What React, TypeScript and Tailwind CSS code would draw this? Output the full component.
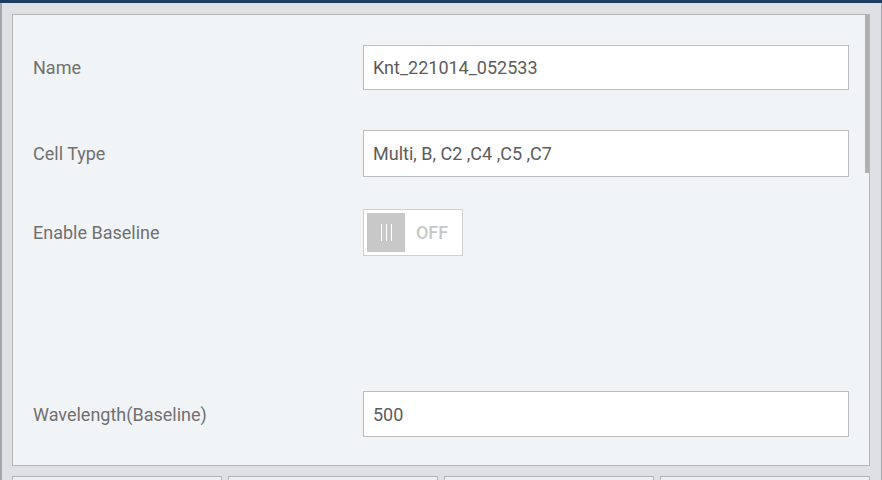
import React from 'react';

const Field: React.FC<{ label: string; value: string; className?: string; h?: string }> = ({ label, value, className, h }) => (
  <div className={`flex items-center ${className ?? ''}`}>
    <div className="w-[330px] text-[18px] text-[#707070]">{label}</div>
    <input
      readOnly
      value={value}
      className={`w-[486px] ${h ?? 'h-[46px]'} border border-[#bdbdbd] bg-white px-[9px] text-[18px] text-[#5c5c5c] outline-none`}
    />
  </div>
);

const Toggle: React.FC = () => (
  <div className="flex w-[100px] h-[47px] items-center border border-[#d0d0d0] bg-white p-[3px]">
    <div className="flex w-[38px] h-[39px] items-center justify-center gap-[4px] bg-[#c8c8c8]">
      <span className="w-px h-[17px] bg-white" />
      <span className="w-px h-[17px] bg-white" />
      <span className="w-px h-[17px] bg-white" />
    </div>
    <div className="flex-1 text-center text-[18px] font-medium text-[#c8c8c8]">OFF</div>
  </div>
);

export default function App() {
  return (
    <div className="w-[882px] h-[480px] overflow-hidden bg-[#1d3b5e] font-['Roboto',sans-serif]">
      <div className="h-[3px]" />
      <div className="flex h-[477px]">
        <div className="w-[2px] bg-[#a3a6ab]" />
        <div className="flex-1 bg-[#dfe0e4] pl-[10px] pr-[11px] pt-[11px]">
          <div className="relative h-[452px] border border-[#b5b5b5] bg-[#f0f4f7] pl-[20px] pt-[30px]">
            <div className="absolute right-0 top-0 w-[4px] h-[158px] bg-[#b0b0b0]" />
            <Field label="Name" value="Knt_221014_052533" h="h-[45px]" />
            <Field label="Cell Type" value="Multi, B, C2 ,C4 ,C5 ,C7" className="mt-[40px]" h="h-[47px]" />
            <div className="mt-[32px] flex items-center">
              <div className="w-[330px] text-[18px] text-[#707070]">Enable Baseline</div>
              <Toggle />
            </div>
            <Field label="Wavelength(Baseline)" value="500" className="mt-[135px]" />
          </div>
          <div className="mt-[10px] grid grid-cols-4 gap-[6px]">
            <div className="h-[40px] border border-[#b5b5b5] bg-[#eceef1]" />
            <div className="h-[40px] border border-[#b5b5b5] bg-[#eceef1]" />
            <div className="h-[40px] border border-[#b5b5b5] bg-[#eceef1]" />
            <div className="h-[40px] border border-[#b5b5b5] bg-[#eceef1]" />
          </div>
        </div>
        <div className="w-[1px] bg-[#a3a6ab]" />
      </div>
    </div>
  );
}
